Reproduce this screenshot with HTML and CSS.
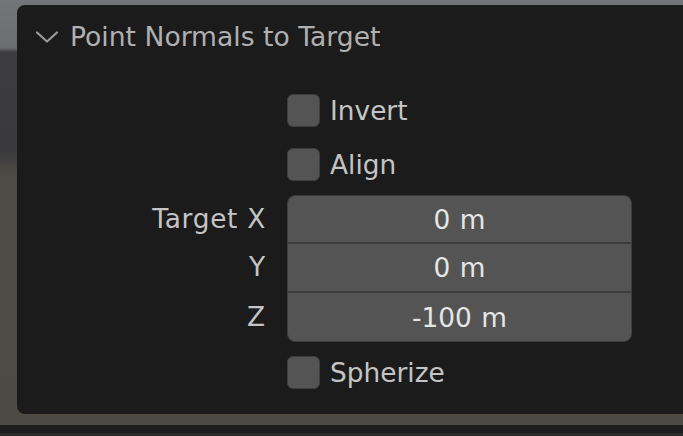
FILE: index.html
```html
<!DOCTYPE html>
<html>
<head>
<meta charset="utf-8">
<link rel="stylesheet" href="styles.css">
</head>
<body>
<div class="viewport">
  <div class="panel">
    <div class="header">
      <svg class="chev" width="24" height="12" viewBox="0 0 24 12"><path d="M2 1.5 L12 10.5 L22 1.5" fill="none" stroke="#9a9a9a" stroke-width="2.2" stroke-linecap="round" stroke-linejoin="round"/></svg>
      <span class="title">Point Normals to Target</span>
    </div>
    <div class="body">
      <div class="row">
        <div class="label"></div>
        <div class="check"><span class="box"></span><span class="ctext">Invert</span></div>
      </div>
      <div class="row">
        <div class="label"></div>
        <div class="check"><span class="box"></span><span class="ctext">Align</span></div>
      </div>
      <div class="group">
        <div class="labels">
          <div class="flabel r1 wide">Target X</div>
          <div class="flabel r2">Y</div>
          <div class="flabel r3">Z</div>
        </div>
        <div class="fields">
          <div class="field r1">0 m</div>
          <div class="field r2">0 m</div>
          <div class="field r3">-100 m</div>
        </div>
      </div>
      <div class="row">
        <div class="label"></div>
        <div class="check"><span class="box"></span><span class="ctext">Spherize</span></div>
      </div>
    </div>
  </div>
  <div class="footbar"></div>
</div>
</body>
</html>
```
FILE: styles.css
```css
html, body {
  margin: 0;
  padding: 0;
  width: 683px;
  height: 436px;
  overflow: hidden;
}
body {
  font-family: "DejaVu Sans", "Liberation Sans", sans-serif;
  background: #4e4a46;
}
.viewport {
  height: 436px;
  display: flex;
  flex-direction: column;
  background: linear-gradient(to bottom, #747578 0px, #6c6d70 48px, #3c3c3e 52px, #3a3a3c 150px, #4e4a46 175px, #4d4945 425px);
}
.panel {
  margin: 5px 0 0 17px;
  height: 409px;
  background: #1b1b1b;
  border-radius: 8px 0 0 8px;
  flex: none;
}
.header {
  height: 62px;
  display: flex;
  align-items: center;
  padding-left: 18px;
  box-sizing: border-box;
}
.chev {
  display: block;
  margin-top: 2px;
}
.title {
  margin-left: 11px;
  font-size: 26.6px;
  color: #b0b0b0;
}
.body {
  padding-top: 19px;
  display: flex;
  flex-direction: column;
  gap: 6px;
}
.row {
  display: flex;
  height: 48px;
  align-items: center;
}
.label {
  width: 248px;
  margin-right: 22px;
}
.check {
  display: flex;
  align-items: center;
}
.box {
  width: 33px;
  height: 33px;
  box-sizing: border-box;
  background: #545454;
  border: 1px solid #3e3e3e;
  border-radius: 6px;
}
.ctext {
  margin-left: 10px;
  font-size: 26.4px;
  color: #c4c4c4;
}
.group {
  display: flex;
  margin-top: 1px;
}
.labels {
  width: 248px;
  margin-right: 22px;
  display: flex;
  flex-direction: column;
}
.flabel {
  text-align: right;
  font-size: 26.4px;
  color: #c4c4c4;
  display: flex;
  align-items: center;
  justify-content: flex-end;
}
.wide {
  letter-spacing: 0.7px;
  margin-right: -1px;
}
.fields {
  width: 345px;
  background: #3c3c3c;
  border: 1px solid #3c3c3c;
  border-radius: 8px;
  overflow: hidden;
  display: flex;
  flex-direction: column;
  gap: 2px;
  box-sizing: border-box;
}
.field {
  background: #545454;
  color: #e6e6e6;
  font-size: 26.4px;
  word-spacing: 1px;
  display: flex;
  align-items: center;
  justify-content: center;
}
.r1 { height: 46px; }
.r2 { height: 47px; }
.r3 { height: 48px; }
.labels .r1 { height: 47px; }
.labels .r2 { height: 49px; }
.labels .r3 { height: 50px; }
.footbar {
  margin-top: 11px;
  height: 8px;
  background: #1d1d1d;
  border-bottom: 3px solid #2b2b2b;
  flex: none;
}
```
